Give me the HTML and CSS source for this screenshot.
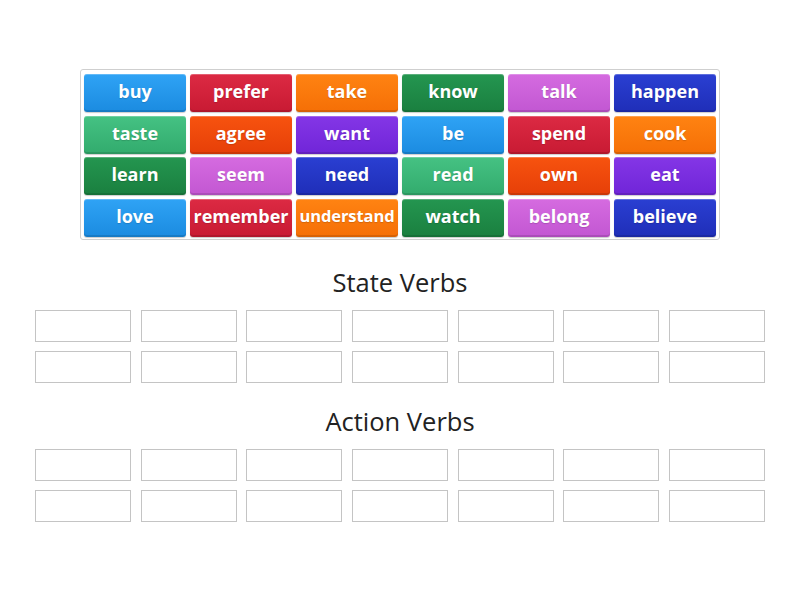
FILE: index.html
```html
<!DOCTYPE html>
<html lang="en">
<head>
<meta charset="utf-8">
<title>State and Action Verbs</title>
<link rel="stylesheet" href="styles.css">
</head>
<body>
<div class="page">
  <div class="board">
    <div class="tile c1">buy</div>
    <div class="tile c2">prefer</div>
    <div class="tile c3">take</div>
    <div class="tile c4">know</div>
    <div class="tile c5">talk</div>
    <div class="tile c6">happen</div>
    <div class="tile c7">taste</div>
    <div class="tile c8">agree</div>
    <div class="tile c9">want</div>
    <div class="tile c1">be</div>
    <div class="tile c2">spend</div>
    <div class="tile c3">cook</div>
    <div class="tile c4">learn</div>
    <div class="tile c5">seem</div>
    <div class="tile c6">need</div>
    <div class="tile c7">read</div>
    <div class="tile c8">own</div>
    <div class="tile c9">eat</div>
    <div class="tile c1">love</div>
    <div class="tile c2">remember</div>
    <div class="tile c3 fit">understand</div>
    <div class="tile c4">watch</div>
    <div class="tile c5">belong</div>
    <div class="tile c6">believe</div>
  </div>

  <section class="group group-state">
    <h2 class="group-title">State Verbs</h2>
    <div class="slots">
      <div class="slot"></div><div class="slot"></div><div class="slot"></div><div class="slot"></div><div class="slot"></div><div class="slot"></div><div class="slot"></div>
      <div class="slot"></div><div class="slot"></div><div class="slot"></div><div class="slot"></div><div class="slot"></div><div class="slot"></div><div class="slot"></div>
    </div>
  </section>

  <section class="group group-action">
    <h2 class="group-title">Action Verbs</h2>
    <div class="slots">
      <div class="slot"></div><div class="slot"></div><div class="slot"></div><div class="slot"></div><div class="slot"></div><div class="slot"></div><div class="slot"></div>
      <div class="slot"></div><div class="slot"></div><div class="slot"></div><div class="slot"></div><div class="slot"></div><div class="slot"></div><div class="slot"></div>
    </div>
  </section>
</div>
</body>
</html>
```

FILE: styles.css
```css
* { box-sizing: border-box; }
html, body { margin: 0; padding: 0; background: #ffffff; }
body {
  font-family: "Open Sans", "Noto Sans", "Liberation Sans", sans-serif;
  color: #222222;
}
.page {
  width: 800px;
  height: 600px;
  padding-top: 69px;
}
.board {
  width: 640px;
  margin: 0 auto;
  border: 1px solid #cfcfcf;
  border-radius: 3px;
  padding: 4px 3px 2px 3px;
  display: grid;
  grid-template-columns: repeat(6, 1fr);
  column-gap: 4px;
  row-gap: 3.67px;
}
.tile {
  height: 38px;
  border-radius: 3px;
  display: flex;
  align-items: center;
  justify-content: center;
  color: #ffffff;
  font-weight: 700;
  font-size: 18px;
  line-height: 1;
  padding-bottom: 4px;
  white-space: nowrap;
  text-shadow: 0 1px 1px rgba(0,0,0,0.15);
  box-shadow: inset 0 1px 0 rgba(255,255,255,0.25), inset 0 -2px 0 rgba(0,0,0,0.12), 0 1px 1px rgba(0,0,0,0.2);
}
.tile.fit { font-size: 16.5px; letter-spacing: -0.1px; }
.c1 { background: linear-gradient(#2fa3f5, #1b8be0); }
.c2 { background: linear-gradient(#dc2a43, #c81a33); }
.c3 { background: linear-gradient(#ff8312, #f56f06); }
.c4 { background: linear-gradient(#249650, #1a7f3f); }
.c5 { background: linear-gradient(#d56be0, #c257d2); }
.c6 { background: linear-gradient(#2a3fd2, #1f2eb8); }
.c7 { background: linear-gradient(#45c283, #32ab6d); }
.c8 { background: linear-gradient(#f7530f, #e63f08); }
.c9 { background: linear-gradient(#8436e6, #7025d8); }

.group-state { margin-top: 26px; }
.group-action { margin-top: 22px; }
.group-title {
  margin: 0 0 12px 0;
  text-align: center;
  font-weight: 400;
  font-size: 25.5px;
  line-height: 32px;
  color: #222222;
}
.slots {
  width: 730px;
  margin: 0 auto;
  display: grid;
  grid-template-columns: repeat(7, 96px);
  column-gap: 9.67px;
  row-gap: 9px;
}
.slot {
  height: 32px;
  border: 1px solid #c4c4c4;
  background: #ffffff;
}
```
